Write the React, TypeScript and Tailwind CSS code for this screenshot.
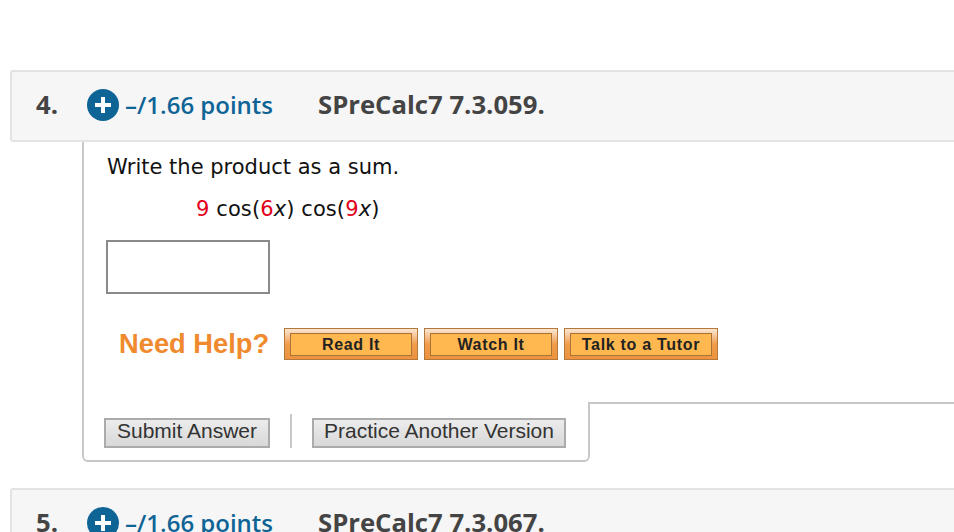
const HelpButton = ({ label, width }: { label: string; width: string }) => {
  return (
    <button
      className={`${width} h-[32px] border border-[#b3783a] bg-gradient-to-b from-[#fbe6d2] via-[#f09c4a] to-[#ec9240] px-[5px] pb-[3px] pt-[4px]`}
    >
      <span className="flex h-full items-center justify-center border border-[#a9743a] bg-[#ffb84f] font-['Liberation_Sans',sans-serif] text-[16px] font-bold tracking-[0.7px] text-[#222]">
        {label}
      </span>
    </button>
  );
};

const QuestionHeader = ({ num, code }: { num: string; code: string }) => {
  return (
    <div className="ml-[10px] flex h-[72px] w-[960px] items-center rounded-[3px] border-2 border-[#e3e3e3] bg-[#f6f6f6] pb-[2px] font-['Open_Sans',sans-serif] text-[25.7px]">
      <span className="ml-[24px] w-[51px] font-bold text-[#444]">{num}</span>
      <span className="flex h-[32px] w-[32px] items-center justify-center rounded-full bg-[#0f6496]">
        <svg width="18" height="18" viewBox="0 0 18 18">
          <path d="M9 1v16M1 9h16" stroke="white" strokeWidth="4" />
        </svg>
      </span>
      <span className="ml-[6px] w-[193px] text-[24px] font-semibold text-[#0f6496]">–/1.66 points</span>
      <span className="font-bold text-[#444]">{code}</span>
    </div>
  );
};

export default function App() {
  return (
    <div className="h-[532px] w-[954px] overflow-hidden bg-white pt-[70px]">
      <QuestionHeader num="4." code="SPreCalc7 7.3.059." />

      {/* Question body */}
      <div className="ml-[82px] h-[260px] border-l-2 border-[#c8c8c8] pl-[23px] font-['DejaVu_Sans',sans-serif] text-[21px] text-[#111]">
        <p className="pt-[10px] leading-[30px]">Write the product as a sum.</p>
        <p className="ml-[89px] mt-[12px] leading-[30px] tracking-[0.1px]">
          <span className="text-[#e2001a]">9</span> cos(<span className="text-[#e2001a]">6</span>
          <i>x</i>) cos(<span className="text-[#e2001a]">9</span>
          <i>x</i>)
        </p>
        <div className="-ml-[1px] mt-[16px] h-[54px] w-[164px] border-2 border-[#8a8a8a] bg-white" />

        {/* Need help */}
        <div className="mt-[34px] flex items-center">
          <span className="ml-[12px] w-[165px] font-['Liberation_Sans',sans-serif] text-[27.3px] font-bold leading-[32px] text-[#ef8a2e]">
            Need Help?
          </span>
          <div className="flex gap-[6px]">
            <HelpButton label="Read It" width="w-[134px]" />
            <HelpButton label="Watch It" width="w-[134px]" />
            <HelpButton label="Talk to a Tutor" width="w-[154px]" />
          </div>
        </div>
      </div>

      {/* Action row */}
      <div className="ml-[82px] flex h-[60px]">
        <div className="flex w-[508px] items-start rounded-b-[6px] border-2 border-t-0 border-[#c8c8c8] pl-[20px] pt-[12px] font-['Liberation_Sans',sans-serif] text-[21px] text-[#333]">
          <button className="mt-[4px] h-[30px] w-[166px] border-2 border-[#ababab] bg-gradient-to-b from-[#ececec] to-[#d8d8d8] pb-[4px] leading-[22px]">
            Submit Answer
          </button>
          <div className="mx-[20px] h-[34px] w-[2px] bg-[#c8c8c8]" />
          <button className="mt-[4px] h-[30px] w-[254px] border-2 border-[#ababab] bg-gradient-to-b from-[#ececec] to-[#d8d8d8] pb-[4px] leading-[22px]">
            Practice Another Version
          </button>
        </div>
        <div className="flex-1 border-t-2 border-[#c8c8c8]" />
      </div>

      <div className="mt-[26px]">
        <QuestionHeader num="5." code="SPreCalc7 7.3.067." />
      </div>
    </div>
  );
}
